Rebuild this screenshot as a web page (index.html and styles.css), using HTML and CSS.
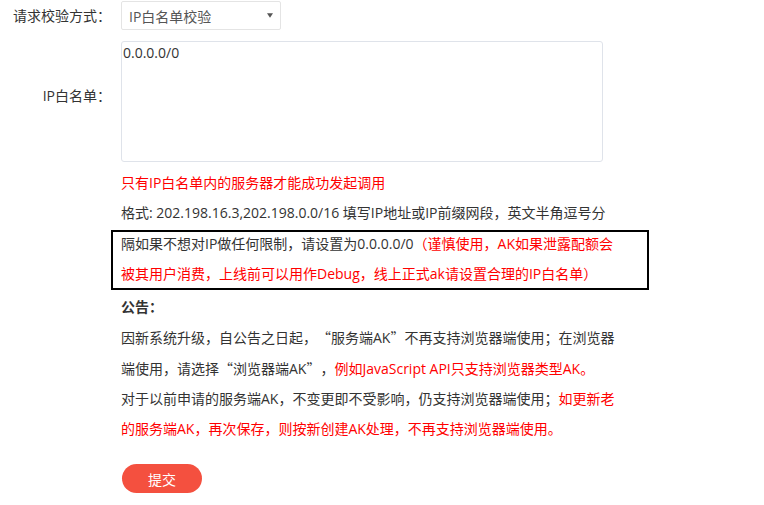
FILE: index.html
```html
<!DOCTYPE html>
<html lang="zh-CN">

<head>
    <meta charset="UTF-8" />
    <meta name="viewport" content="width=device-width, initial-scale=1.0" />
    <title>服务端AK设置</title>
    <link rel="stylesheet" href="styles.css">
</head>

<body>
    <form class="ak-form" onsubmit="return false">
        <label class="field-label">请求校验方式：</label>
        <div class="fake-select">
            <span>IP白名单校验</span>
            <svg class="select-arrow" width="7" height="5" viewBox="0 0 7 5"><path d="M0 0H7L3.5 5Z" fill="#555" /></svg>
        </div>

        <label class="field-label" for="ip-list">IP白名单：</label>
        <textarea id="ip-list" class="ip-list">0.0.0.0/0</textarea>

        <span></span>
        <div class="notes">
            <p class="hint red">只有IP白名单内的服务器才能成功发起调用</p>
            <p>格式: 202.198.16.3,202.198.0.0/16 填写IP地址或IP前缀网段，英文半角逗号分</p>
            <div class="warn-box">
                <p>隔如果不想对IP做任何限制，请设置为0.0.0.0/0<span class="red">（谨慎使用，AK如果泄露配额会被其用户消费，上线前可以用作Debug，线上正式ak请设置合理的IP白名单）</span></p>
            </div>
            <p class="notice-title">公告：</p>
            <p>因新系统升级，自公告之日起，<span class="q">“</span>服务端AK<span class="q">”</span>不再支持浏览器端使用；在浏览器端使用，请选择<span class="q">“</span>浏览器端AK<span class="q">”</span>，<span class="red">例如JavaScript API只支持浏览器类型AK。</span></p>
            <p>对于以前申请的服务端AK，不变更即不受影响，仍支持浏览器端使用；<span class="red">如更新老的服务端AK，再次保存，则按新创建AK处理，不再支持浏览器端使用。</span></p>
            <button class="btn-submit" type="submit">提交</button>
        </div>
    </form>
</body>

</html>
```

FILE: styles.css
```css
body {
    margin: 0;
    background: #fff;
    color: #333;
    font-family: "Open Sans", "Noto Sans CJK SC", sans-serif;
    font-size: 14px;
    text-spacing-trim: space-all;
}

.ak-form {
    display: grid;
    grid-template-columns: 111px 500px;
    column-gap: 10px;
    align-items: center;
    padding-top: 1px;
}

.field-label {
    text-align: right;
    line-height: 20px;
}

.fake-select {
    box-sizing: border-box;
    width: 160px;
    height: 29px;
    padding: 0 7px 0 7px;
    border: 1px solid #e4e4e4;
    border-radius: 2px;
    display: flex;
    align-items: center;
    justify-content: space-between;
    color: #555;
}

.select-arrow {
    width: 6px;
    height: 5px;
}

.ip-list {
    box-sizing: border-box;
    width: 482px;
    height: 121px;
    margin: 11px 0 0;
    padding: 1px;
    border: 1px solid #dfe3ea;
    border-radius: 3px;
    font-family: inherit;
    font-size: 14px;
    line-height: 20px;
    color: #333;
    resize: none;
    outline: none;
}

.notes {
    line-height: 30px;
    align-self: start;
}

.notes p {
    margin: 0;
}

.notes .hint {
    margin-top: 6px;
}

.red {
    color: #f00;
}

.q {
    font-family: "Noto Sans CJK SC", sans-serif;
}

.warn-box {
    box-sizing: border-box;
    height: 60px;
    margin: 2px 0 0 -10px;
    width: 538px;
    padding: 0 26px 0 8px;
    border: 2px solid #000;
}

.warn-box p {
    margin-top: -3px;
}

.notes .notice-title {
    margin-top: 2px;
    font-weight: bold;
}

.btn-submit {
    display: block;
    margin: 20px 0 0 1px;
    width: 80px;
    height: 29px;
    border: none;
    border-radius: 15px;
    background: #f4503f;
    color: #fff;
    font-family: inherit;
    font-size: 14px;
    cursor: pointer;
}
```
